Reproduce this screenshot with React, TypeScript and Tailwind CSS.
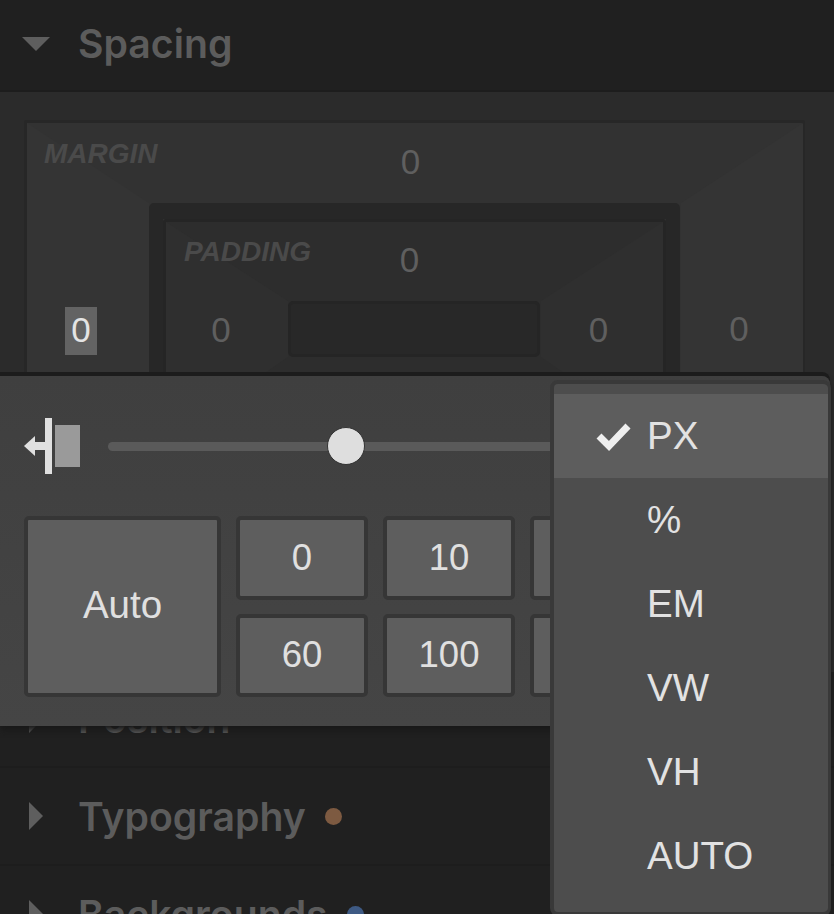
const units = ['PX', '%', 'EM', 'VW', 'VH', 'AUTO'];
const presets = ['0', '10', '20', '60', '100', '200'];

const Row = ({ title, open, dot, className, titleClass }: { title: string; open?: boolean; dot?: string; className: string; titleClass: string }) => (
  <div className={`flex items-center border-b-2 border-[#1d1d1d] bg-[#202020] ${className}`}>
    <div className="flex w-[78px] justify-start pl-[22px]">
      {open ? (
        <svg width="28" height="14" viewBox="0 0 28 14" className="mb-[3px]"><polygon points="0,0 28,0 14,14" fill="#5e5e5e" /></svg>
      ) : (
        <svg width="14" height="28" viewBox="0 0 14 28" className="ml-[7px]"><polygon points="0,0 14,14 0,28" fill="#5e5e5e" /></svg>
      )}
    </div>
    <span className={`font-['Inter'] text-[39.2px] font-semibold text-[#5c5c5c] ${titleClass}`}>{title}</span>
    {dot && <span className={`ml-[19px] h-[17px] w-[17px] rounded-full ${dot}`} />}
  </div>
);

const Zero = ({ className = '' }: { className?: string }) => (
  <span className={`relative text-[35px] leading-none text-[#5f5f5f] ${className}`}>0</span>
);

const SpacingBox = () => (
  <div className="h-[580px] overflow-hidden bg-[#2b2b2b] pl-6 pr-[29px] pt-[28px]">
    {/* margin */}
    <div className="relative h-[600px] rounded-[3px] border-[3px] border-[#272727] bg-[#323232]">
      <svg className="absolute inset-0" width="776" height="600" viewBox="0 0 776 600">
        <polygon points="0,0 122,80 122,500 0,580" fill="#343434" />
        <polygon points="776,0 654,80 654,500 776,580" fill="#343434" />
      </svg>
      <span className="absolute left-[17px] top-[10px] text-[28px] font-bold italic text-[#4a4a4a]">MARGIN</span>
      <div className="relative flex h-[80px] items-center justify-center pr-2">
        <Zero className="mt-[-4px]" />
      </div>
      <div className="relative flex">
        <div className="flex h-[300px] w-[122px] justify-center pr-[14px] pt-[104px]">
          <span className="flex h-[48px] w-[32px] items-center justify-center bg-[#636363] pb-1 text-[35px] leading-none text-[#e4e4e4]">0</span>
        </div>
        {/* padding */}
        <div className="h-[400px] w-[531px] rounded-[5px] border-[14px] border-t-[16px] border-[#272727]">
          <div className="relative h-full rounded-[3px] border-[3px] border-[#252525] bg-[#2d2d2d]">
            <svg className="absolute inset-0" width="497" height="380" viewBox="0 0 497 380">
              <polygon points="0,0 122,79 122,135 0,220" fill="#2f2f2f" />
              <polygon points="497,0 375,79 375,135 497,220" fill="#2f2f2f" />
            </svg>
            <span className="absolute left-[18px] top-[9px] text-[28px] font-bold italic text-[#4a4a4a]">PADDING</span>
            <div className="relative flex h-[79px] items-center justify-center pr-[10px]">
              <Zero className="mt-[-4px]" />
            </div>
            <div className="relative flex h-[56px] items-center">
              <div className="flex w-[122px] justify-center pr-[12px]"><Zero /></div>
              <div className="h-[56px] w-[252px] rounded-[5px] border-[3px] border-[#252525] bg-[#282828]" />
              <div className="flex flex-1 justify-center pr-[6px]"><Zero /></div>
            </div>
          </div>
        </div>
        <div className="flex flex-1 justify-center pr-1 pt-[108px]"><Zero /></div>
      </div>
    </div>
  </div>
);

export default function App() {
  return (
    <div className="relative h-[914px] w-[834px] overflow-hidden bg-[#202020] font-['Liberation_Sans',sans-serif]">
      <Row title="Spacing" open className="h-[92px]" titleClass="mt-[-1px]" />
      <SpacingBox />
      <Row title="Position" className="h-[96px]" titleClass="mt-[1px]" />
      <Row title="Typography" dot="bg-[#7d5a41]" className="h-[98px]" titleClass="mt-[3px]" />
      <Row title="Backgrounds" dot="bg-[#3e5a84]" className="h-[98px]" titleClass="mt-[3px]" />

      {/* size popover */}
      <div className="absolute left-0 top-[376px] h-[350px] w-[830px] rounded-tr-lg bg-gradient-to-b from-[#3f3f3f] to-[#454545] px-6 pt-[42px] shadow-[0_-4px_0_#1c1c1c,0_4px_6px_#181818]">
        <div className="flex h-14 items-center">
          <svg width="56" height="56" viewBox="0 0 56 56" className="shrink-0">
            <rect x="21" y="0" width="7" height="56" fill="#e0e0e0" />
            <rect x="31" y="7" width="25" height="42" fill="#9a9a9a" />
            <polygon points="0,28 11,18 11,38" fill="#e0e0e0" />
            <rect x="10" y="24" width="11" height="8" fill="#e0e0e0" />
          </svg>
          <div className="relative ml-7 h-[9px] flex-1 rounded-full bg-[#5a5a5a]">
            <div className="absolute left-[219px] top-[-15px] h-[38px] w-[38px] rounded-full border border-[#333333] bg-[#dedede]" />
          </div>
        </div>
        <div className="mt-[42px] grid grid-cols-[197px_132px_132px_132px] grid-rows-[84px_83px] gap-x-[15px] gap-y-[14px]">
          <button className="row-span-2 rounded-[5px] border-4 border-[#363636] bg-[#5e5e5e] pb-[3px] text-[38.5px] text-[#e0e0e0]">Auto</button>
          {presets.map((p) => (
            <button key={p} className="rounded-[5px] border-4 border-[#363636] bg-[#5e5e5e] text-[36.5px] text-[#e0e0e0]">{p}</button>
          ))}
        </div>
      </div>

      {/* unit dropdown */}
      <div className="absolute left-[550px] top-[380px] h-[536px] w-[281px] rounded-lg border-4 border-r-[3px] border-[#393939] bg-[#4d4d4d] pt-[10px]">
        {units.map((u, i) => (
          <div key={u} className={`relative flex h-[84px] items-center pb-[1px] pl-[93px] text-[38.5px] text-[#e2e2e2] ${i === 0 ? 'bg-[#5d5d5d]' : ''}`}>
            {i === 0 && (
              <svg width="36" height="30" viewBox="0 0 36 30" className="absolute left-[42px] top-[28px]">
                <polyline points="3,14 13,24 32,4" fill="none" stroke="#efefef" strokeWidth="7" />
              </svg>
            )}
            {u}
          </div>
        ))}
      </div>
    </div>
  );
}
